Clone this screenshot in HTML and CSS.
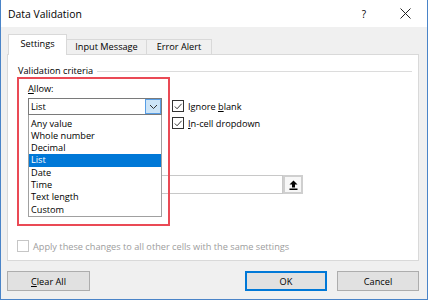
FILE: index.html
```html
<!DOCTYPE html>
<html>
<head>
<meta charset="utf-8">
<link rel="stylesheet" href="styles.css">
</head>
<body>
<div class="window">
  <div class="titlebar">
    <span class="title">Data Validation</span>
    <span class="help">?</span>
    <span class="close"><svg width="11" height="11" viewBox="0 0 11 11"><path d="M0.5 0.5 L10.5 10.5 M10.5 0.5 L0.5 10.5" stroke="#222" stroke-width="1" fill="none"/></svg></span>
  </div>
  <div class="body">
    <div class="tabs">
      <div class="tab active">Settings</div>
      <div class="tab t2">Input Message</div>
      <div class="tab t3">Error Alert</div>
    </div>
    <div class="panel">
      <div class="group-title"><span>Validation criteria</span><span class="rule"></span></div>
      <div class="criteria">
        <div class="allow-col">
          <div class="label"><u>A</u>llow:</div>
          <div class="combo">
            <span class="combo-text">List</span>
            <span class="arrow"><svg width="9" height="6" viewBox="0 0 9 6"><path d="M1 1 L4.5 4.5 L8 1" stroke="#333" stroke-width="1" fill="none"/></svg></span>
          </div>
        </div>
        <div class="checks">
          <div class="check">
            <span class="box"><svg width="11" height="11" viewBox="0 0 11 11"><path d="M2 5.5 L4.5 8 L9.5 2.5" stroke="#222" stroke-width="1" fill="none"/></svg></span>
            <span>Ignore <u>b</u>lank</span>
          </div>
          <div class="check">
            <span class="box"><svg width="11" height="11" viewBox="0 0 11 11"><path d="M2 5.5 L4.5 8 L9.5 2.5" stroke="#222" stroke-width="1" fill="none"/></svg></span>
            <span><u>I</u>n-cell dropdown</span>
          </div>
        </div>
      </div>
      <div class="source-row">
        <div class="source-input"></div>
        <div class="source-btn"><svg width="9" height="10" viewBox="0 0 9 10"><path d="M4.5 0.5 L8.5 4.5 L6 4.5 L6 7.5 L3 7.5 L3 4.5 L0.5 4.5 Z" fill="#000"/><rect x="0.5" y="8.5" width="8" height="1.5" fill="#000"/></svg></div>
      </div>
      <div class="apply">
        <span class="box disabled"></span>
        <span>Apply these changes to all other cells with the same settings</span>
      </div>

      <div class="listbox">
        <div class="item">Any value</div>
        <div class="item">Whole number</div>
        <div class="item">Decimal</div>
        <div class="item selected">List</div>
        <div class="item">Date</div>
        <div class="item">Time</div>
        <div class="item">Text length</div>
        <div class="item">Custom</div>
      </div>
      <div class="redbox"></div>
    </div>
    <div class="buttons">
      <div class="btn"><u>C</u>lear All</div>
      <div class="spacer"></div>
      <div class="btn default">OK</div>
      <div class="btn">Cancel</div>
    </div>
  </div>
</div>
</body>
</html>
```

FILE: styles.css
```css
* { box-sizing: border-box; }
html, body { margin: 0; padding: 0; }
body {
  width: 428px;
  height: 300px;
  overflow: hidden;
  font-family: "Open Sans", "Noto Sans", sans-serif;
  font-size: 9.2px;
  color: #000;
  background: #fff;
}
u { text-decoration: underline; text-underline-offset: 1px; }

.window {
  width: 428px;
  height: 300px;
  border-left: 1px solid #4a84c8;
  border-right: 1px solid #4a84c8;
  border-bottom: 1px solid #4a84c8;
  background: #f0f0f0;
  display: flex;
  flex-direction: column;
}

.titlebar {
  height: 27px;
  background: #fff;
  display: flex;
  align-items: center;
  padding-left: 7px;
  flex-shrink: 0;
}
.title { font-size: 10.4px; flex: 1; }
.help { font-size: 10px; width: 12px; text-align: center; margin-right: 30px; }
.close { width: 11px; height: 11px; display: flex; margin-right: 16px; }

.body {
  flex: 1;
  padding: 0 8px 0 6px;
  display: flex;
  flex-direction: column;
}

.tabs {
  margin-top: 7px;
  height: 20px;
  display: flex;
  align-items: flex-end;
  padding-left: 1px;
  position: relative;
  z-index: 2;
}
.tab {
  height: 15px;
  border: 1px solid #d9d9d9;
  border-bottom: none;
  background: #f0f0f0;
  display: flex;
  align-items: center;
  justify-content: center;
  line-height: 1;
}
.tab.active {
  width: 59px;
  height: 21px;
  margin-bottom: -1px;
  background: #fff;
  padding-bottom: 2px;
}
.t2 { width: 80px; border-left: none; }
.t3 { width: 65px; border-left: none; }

.panel {
  position: relative;
  height: 207px;
  background: #fff;
  border: 1px solid #d9d9d9;
  flex-shrink: 0;
}

.group-title {
  margin-top: 10px;
  height: 12px;
  line-height: 12px;
  display: flex;
  align-items: center;
  padding-left: 10px;
  padding-right: 6px;
}
.rule { flex: 1; height: 1px; background: #dcdcdc; margin-left: 4px; }

.criteria {
  display: flex;
  margin-top: 6px;
  padding-left: 20px;
}
.label { height: 12px; line-height: 12px; }
.combo {
  margin-top: 3px;
  width: 134px;
  height: 17px;
  border: 1px solid #7a7a7a;
  background: #fff;
  display: flex;
  align-items: center;
  justify-content: space-between;
  padding-left: 2px;
}
.arrow {
  width: 16px;
  height: 15px;
  background: #cce4f7;
  border: 1px solid #569de5;
  display: flex;
  align-items: center;
  justify-content: center;
}

.checks {
  margin-top: 15px;
  margin-left: 10px;
  display: flex;
  flex-direction: column;
  gap: 1px;
}
.check {
  height: 16px;
  display: flex;
  align-items: center;
  gap: 4px;
}
.box {
  width: 12px;
  height: 12px;
  border: 1px solid #333;
  background: #fff;
  display: flex;
  align-items: center;
  justify-content: center;
}
.box svg { display: block; }
.box.disabled { border-color: #c6c6c6; }

.source-row {
  margin-top: 44px;
  padding-left: 20px;
  display: flex;
}
.source-input {
  width: 255px;
  height: 19px;
  border: 1px solid #c8c8c8;
  background: #fff;
}
.source-btn {
  width: 20px;
  height: 19px;
  border: 2px solid #cfcfcf;
  background: #f7f7f7;
  display: flex;
  align-items: center;
  justify-content: center;
}

.apply {
  margin-top: 46px;
  padding-left: 9px;
  display: flex;
  align-items: center;
  gap: 4px;
  color: #9d9d9d;
  height: 12px;
}

.listbox {
  position: absolute;
  left: 20px;
  top: 60px;
  width: 134px;
  height: 102px;
  background: #fff;
  border: 1px solid #a0a0a0;
  border-top: none;
  padding: 2.5px 0 0 0;
}
.item {
  height: 12.3px;
  line-height: 12.3px;
  padding-left: 2px;
}
.item.selected { background: #0078d7; color: #fff; }

.redbox {
  position: absolute;
  left: 9px;
  top: 22px;
  width: 153px;
  height: 149px;
  border: 2px solid #ea4a55;
}

.buttons {
  margin-top: 10px;
  display: flex;
  gap: 10px;
}
.spacer { flex: 1; }
.btn {
  width: 82px;
  height: 20px;
  border: 1px solid #adadad;
  background: #e1e1e1;
  display: flex;
  align-items: center;
  justify-content: center;
}
.btn:first-child { width: 83px; }
.btn.default { border: 1px solid #0078d7; box-shadow: inset 0 0 0 1px #0078d7; }
```
